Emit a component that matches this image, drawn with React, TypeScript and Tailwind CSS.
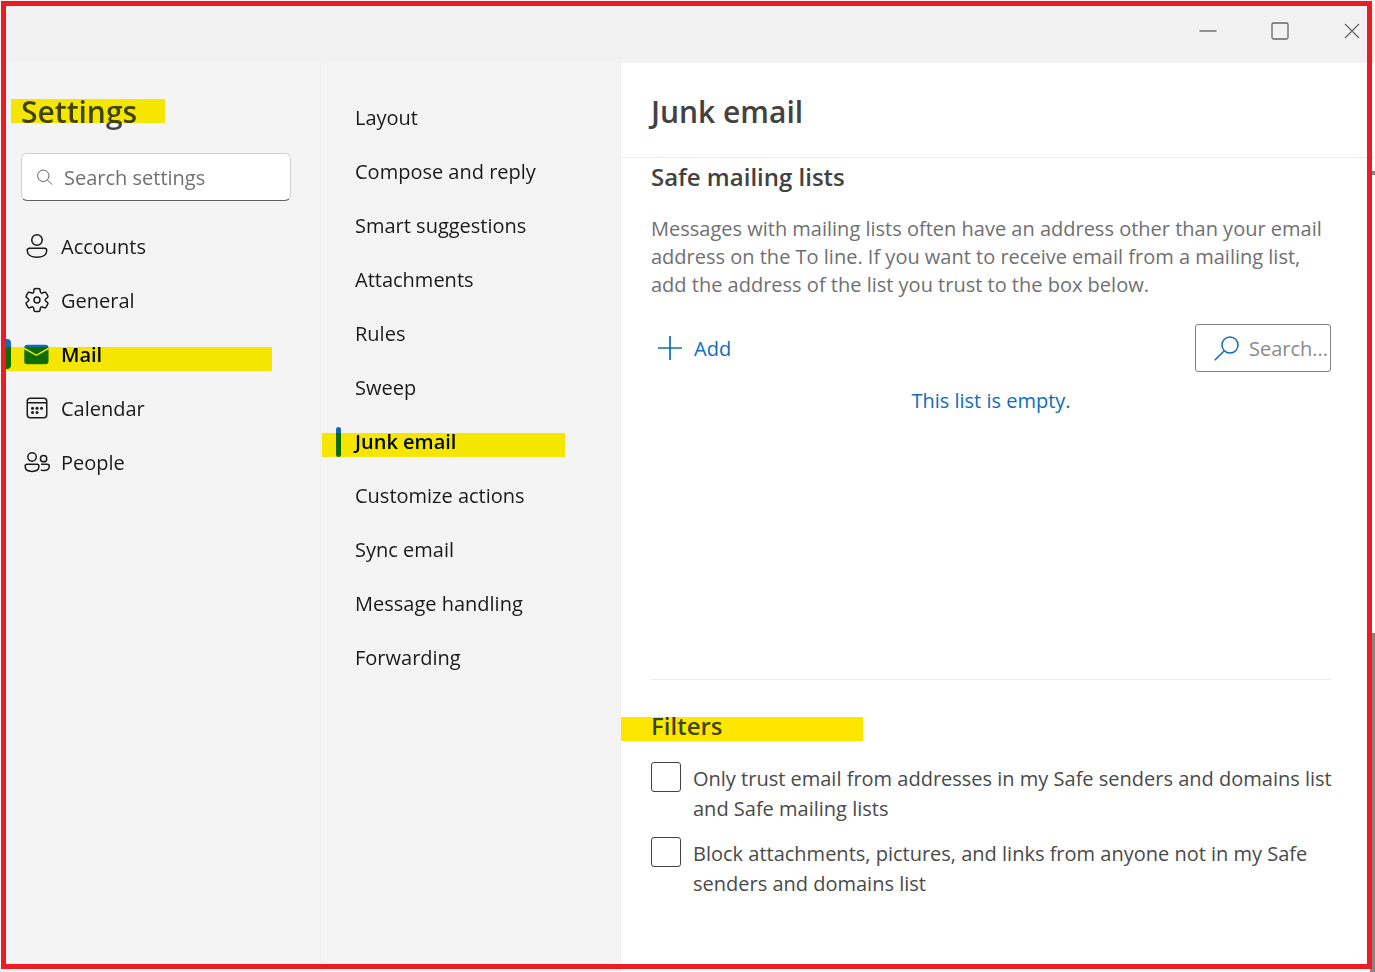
import { useState, type ReactNode } from 'react'
import clsx from 'clsx'

const Icon = ({ children }: { children: ReactNode }) => (
  <svg
    className="w-[30px] h-[30px] shrink-0"
    viewBox="0 0 20 20"
    fill="none"
    stroke="currentColor"
    strokeWidth={1}
    aria-hidden="true"
  >
    {children}
  </svg>
)

const AccountIcon = () => (
  <Icon>
    <circle cx="10" cy="6" r="3.5" />
    <path d="M5 11.5h10a1.5 1.5 0 0 1 1.5 1.5c0 3-3 4.5-6.5 4.5S3.5 16 3.5 13A1.5 1.5 0 0 1 5 11.5Z" />
  </Icon>
)

const GearIcon = () => (
  <Icon>
    <g transform="translate(1 1) scale(0.9)">
      <path
        strokeWidth={1.1}
        d="M1.91 7.38A8.5 8.5 0 0 1 3.7 4.3a.5.5 0 0 1 .54-.13l1.92.68a1 1 0 0 0 1.32-.76l.36-2a.5.5 0 0 1 .4-.4 8.53 8.53 0 0 1 3.55 0c.2.04.35.2.38.4l.37 2a1 1 0 0 0 1.32.76l1.92-.68a.5.5 0 0 1 .54.13 8.5 8.5 0 0 1 1.78 3.08c.06.2 0 .4-.15.54l-1.56 1.32a1 1 0 0 0 0 1.52l1.56 1.32a.5.5 0 0 1 .15.54 8.5 8.5 0 0 1-1.78 3.08.5.5 0 0 1-.54.13l-1.92-.68a1 1 0 0 0-1.32.76l-.37 2a.5.5 0 0 1-.38.4 8.53 8.53 0 0 1-3.56 0 .5.5 0 0 1-.39-.4l-.36-2a1 1 0 0 0-1.32-.76l-1.92.68a.5.5 0 0 1-.54-.13 8.5 8.5 0 0 1-1.78-3.08.5.5 0 0 1 .15-.54l1.56-1.32a1 1 0 0 0 0-1.52L2.06 7.92a.5.5 0 0 1-.15-.54Z"
      />
      <circle cx="10" cy="10" r="2.2" strokeWidth={1.1} />
    </g>
  </Icon>
)

const MailIcon = () => (
  <Icon>
    <g fill="#0f6cbd" stroke="none">
      <path d="M17.700 6.800v8a2 2 0 0 1-2 2H3.500a2 2 0 0 1-2-2v-8l7.800 4.400c.2.100.4.100.6 0L17.700 6.800Z" />
      <path d="M15.700 3.800a2 2 0 0 1 2 1.900l-8.100 4.600-8.100-4.600a2 2 0 0 1 2-1.900h12.200Z" />
    </g>
  </Icon>
)

const CalendarIcon = () => (
  <Icon>
    <rect x="3.5" y="3.5" width="13" height="13" rx="2" />
    <path d="M3.5 6.5h13" />
    <g fill="currentColor" stroke="none">
      <circle cx="7" cy="10.2" r="1" />
      <circle cx="10" cy="10.2" r="1" />
      <circle cx="13" cy="10.2" r="1" />
      <circle cx="7" cy="13" r="1" />
      <circle cx="10" cy="13" r="1" />
    </g>
  </Icon>
)

const PeopleIcon = () => (
  <Icon>
    <circle cx="6.7" cy="6.7" r="2.8" />
    <circle cx="14.4" cy="7.8" r="2.1" />
    <path d="M3.5 11.5h6.4a1.4 1.4 0 0 1 1.4 1.4c0 2.2-2 3.4-4.6 3.4s-4.6-1.2-4.6-3.4a1.4 1.4 0 0 1 1.400-1.400Z" />
    <path d="M12.7 11.5h4.1c.8 0 1.400.6 1.400 1.300 0 1.800-1.600 2.900-3.700 2.900-.7 0-1.400-.1-2-.4" />
  </Icon>
)

const sections = [
  { label: 'Accounts', icon: AccountIcon },
  { label: 'General', icon: GearIcon },
  { label: 'Mail', icon: MailIcon },
  { label: 'Calendar', icon: CalendarIcon },
  { label: 'People', icon: PeopleIcon }
]

const pages = [
  'Layout',
  'Compose and reply',
  'Smart suggestions',
  'Attachments',
  'Rules',
  'Sweep',
  'Junk email',
  'Customize actions',
  'Sync email',
  'Message handling',
  'Forwarding'
]

const filters = [
  'Only trust email from addresses in my Safe senders and domains list and Safe mailing lists',
  'Block attachments, pictures, and links from anyone not in my Safe senders and domains list'
]

// marker pen stroke laid over the text
const Highlight = ({ className }: { className: string }) => (
  <span
    className={clsx(
      'absolute h-6 bg-[#ffe600] mix-blend-darken pointer-events-none',
      className
    )}
  />
)

const TitleBar = () => (
  <header className="flex h-[63px] items-start justify-end gap-[26px] bg-[#f2f2f2] pt-[11px] text-[#666666]">
    <button aria-label="Minimize" className="flex w-[46px] h-10 items-center justify-center">
      <svg className="w-5 h-5" viewBox="0 0 20 20" stroke="currentColor" fill="none">
        <path d="M1.5 10h17" strokeWidth={1.4} />
      </svg>
    </button>
    <button aria-label="Maximize" className="flex w-[46px] h-10 items-center justify-center">
      <svg className="w-5 h-5" viewBox="0 0 20 20" stroke="currentColor" fill="none">
        <rect x="2" y="2" width="16" height="16" rx="1.5" strokeWidth={1.3} />
      </svg>
    </button>
    <button aria-label="Close" className="flex w-[46px] h-10 items-center justify-center">
      <svg className="w-5 h-5" viewBox="0 0 20 20" stroke="currentColor" fill="none">
        <path d="M3 3l14 14M17 3L3 17" strokeWidth={1.3} />
      </svg>
    </button>
  </header>
)

const Sidebar = () => {
  const [active, setActive] = useState('Mail')

  return (
    <aside className="w-[321px] shrink-0 border-r border-[#efefef] pt-[31px]">
      <div className="relative px-[21px]">
        <h1 className="text-[30px] leading-9 font-semibold text-[#424242]">Settings</h1>
        <Highlight className="left-[11px] top-[5px] w-[154px]" />
      </div>

      <label className="mt-[23px] ml-[21px] mr-[29px] flex h-12 items-center gap-2 rounded-md border border-[#d1d1d1] border-b-[#616161] bg-white pl-[13px] pr-2">
        <svg
          className="w-[21px] h-[21px] shrink-0 text-[#616161]"
          viewBox="0 0 21 21"
          fill="none"
          stroke="currentColor"
          aria-hidden="true"
        >
          <circle cx="8.3" cy="8.8" r="5.7" strokeWidth={1} />
          <path d="M12.4 12.9l4.700 4.700" strokeWidth={1} />
        </svg>
        <input
          type="text"
          aria-label="Search settings"
          placeholder="Search settings"
          className="w-full min-w-0 bg-transparent pt-0.5 placeholder:text-[#707070] focus:outline-none"
        />
      </label>

      <nav className="mt-[18px]">
        {sections.map(({ label, icon: SectionIcon }) => (
          <button
            key={label}
            onClick={() => setActive(label)}
            className={clsx(
              'relative flex h-[54px] w-full items-center gap-[9px] pl-[22px] text-left',
              { 'font-semibold text-black': active === label }
            )}
          >
            {active === label && (
              <span className="absolute left-[6px] h-[30px] w-[5px] rounded-r-sm bg-[#0f6cbd]" />
            )}
            <SectionIcon />
            <span className="pt-0.5">{label}</span>
            {label === 'Mail' && <Highlight className="left-[6px] top-5 w-[266px]" />}
          </button>
        ))}
      </nav>
    </aside>
  )
}

const PageList = () => {
  const [active, setActive] = useState('Junk email')

  return (
    <nav className="w-[300px] shrink-0 border-r border-[#efefef] pt-7">
      {pages.map((page) => (
        <button
          key={page}
          onClick={() => setActive(page)}
          className={clsx(
            'relative flex h-[54px] w-full items-center pl-[34px] text-left',
            { 'font-semibold text-black': active === page }
          )}
        >
          {active === page && (
            <span className="absolute left-[15px] h-[30px] w-[5px] rounded-sm bg-[#0f6cbd]" />
          )}
          {page}
          {page === 'Junk email' && <Highlight className="left-px top-[18px] w-[243px]" />}
        </button>
      ))}
    </nav>
  )
}

const JunkEmail = () => (
  <main className="relative min-w-0 flex-1 bg-white">
    <div className="h-[95px] border-b border-[#ebebeb] pt-[31px] pl-[30px]">
      <h2 className="text-[30px] leading-9 font-semibold text-[#424242]">Junk email</h2>
    </div>

    <section className="ml-[30px] mr-[44px] h-[522px] border-b border-[#ebebeb] pt-1">
      <h3 className="text-2xl leading-[30px] font-semibold text-[#424242]">
        Safe mailing lists
      </h3>
      <p className="mt-[23px] leading-7 text-[#707070]">
        Messages with mailing lists often have an address other than your email
        address on the To line. If you want to receive email from a mailing list,
        add the address of the list you trust to the box below.
      </p>
      <div className="mt-[25px] flex items-center justify-between">
        <button className="flex h-12 items-center gap-3 pl-[7px] text-[#0f6cbd]">
          <svg className="w-6 h-6" viewBox="0 0 24 24" fill="none" stroke="currentColor">
            <path d="M0 12h24M12 0v24" strokeWidth={1.7} />
          </svg>
          <span className="pt-0.5">Add</span>
        </button>
        <label className="flex h-12 w-[136px] items-center gap-[10px] rounded-[3px] border border-[#808080] pl-[18px]">
          <svg
            className="w-[25px] h-[25px] shrink-0 text-[#0f6cbd]"
            viewBox="0 0 25 25"
            fill="none"
            stroke="currentColor"
            aria-hidden="true"
          >
            <circle cx="16" cy="9" r="8" strokeWidth={1.5} />
            <path d="M10.3 14.7L.7 24.3" strokeWidth={1.5} />
          </svg>
          <input
            type="text"
            aria-label="Search list"
            placeholder="Search..."
            className="w-full min-w-0 bg-transparent pt-0.5 placeholder:text-[#8a8a8a] focus:outline-none"
          />
        </label>
      </div>
      <p className="mt-[15px] text-center leading-7 text-[#0f6cbd]">This list is empty.</p>
    </section>

    <section className="relative pl-[30px] pr-8 pt-[31px] pb-10 text-[#4a4a4a]">
      <h3 className="text-2xl leading-[30px] font-semibold text-[#424242]">Filters</h3>
      <Highlight className="left-0 top-[37px] w-[242px]" />
      <div className="mt-[21px] flex flex-col gap-[13px]">
        {filters.map((text) => (
          <label key={text} className="flex items-start gap-3">
            <input
              type="checkbox"
              className="h-[30px] w-[30px] shrink-0 appearance-none rounded-[3px] border border-[#424242] bg-white checked:bg-[#0f6cbd]"
            />
            <span className="pt-0.5 leading-[30px]">{text}</span>
          </label>
        ))}
      </div>
    </section>

    {/* scrollbar */}
    <svg className="absolute right-0 top-[107px] h-[5px] w-[5px]" viewBox="0 0 5 5" fill="#858585">
      <path d="M0 5V1h5v4Z" />
    </svg>
    <span className="absolute right-0 top-[570px] bottom-0 w-[5px] bg-[#858585]" />
  </main>
)

const App = () => (
  <div className="flex min-h-screen flex-col bg-[#f4f4f4] font-['Open_Sans','Noto_Sans',sans-serif] text-xl text-[#1a1a1a]">
    <TitleBar />
    <div className="flex flex-1">
      <Sidebar />
      <PageList />
      <JunkEmail />
    </div>
    <div className="pointer-events-none fixed top-px left-px right-[3px] bottom-[3px] border-[5px] border-[#ed1c24]" />
  </div>
)

export default App
